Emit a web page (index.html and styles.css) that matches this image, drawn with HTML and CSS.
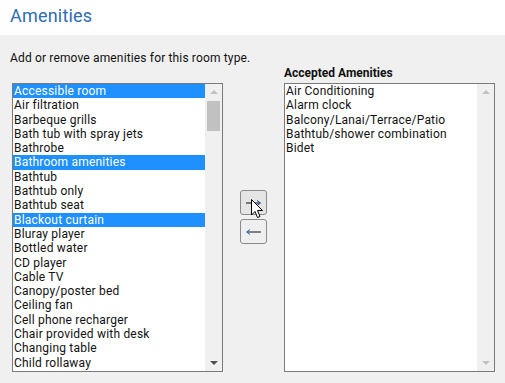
FILE: index.html
```html
<!DOCTYPE html>
<html>
<head>
    <title>Amenities</title>
    <meta charset="utf-8">
    <link rel="stylesheet" href="styles.css">
</head>
<body>
<div class="page-head">
    <h1>Amenities</h1>
</div>

<div class="panel">
    <p class="intro">Add or remove amenities for this room type.</p>

    <div class="picker">
        <div class="col">
            <div class="col-label">&nbsp;</div>
            <div class="listbox">
                <div class="rows">
                    <div class="row sel">Accessible room</div>
                    <div class="row">Air filtration</div>
                    <div class="row">Barbeque grills</div>
                    <div class="row">Bath tub with spray jets</div>
                    <div class="row">Bathrobe</div>
                    <div class="row sel">Bathroom amenities</div>
                    <div class="row">Bathtub</div>
                    <div class="row">Bathtub only</div>
                    <div class="row">Bathtub seat</div>
                    <div class="row sel">Blackout curtain</div>
                    <div class="row">Bluray player</div>
                    <div class="row">Bottled water</div>
                    <div class="row">CD player</div>
                    <div class="row">Cable TV</div>
                    <div class="row">Canopy/poster bed</div>
                    <div class="row">Ceiling fan</div>
                    <div class="row">Cell phone recharger</div>
                    <div class="row">Chair provided with desk</div>
                    <div class="row">Changing table</div>
                    <div class="row">Child rollaway</div>
                </div>
                <div class="scrollbar">
                    <span class="arrow up"></span>
                    <span class="thumb"></span>
                    <span class="track"></span>
                    <span class="arrow down dark"></span>
                </div>
            </div>
        </div>

        <div class="moves">
            <button type="button" class="move-btn hover">
                <svg width="17" height="8" viewBox="0 0 17 8">
                    <line x1="1" y1="4" x2="15" y2="4" stroke="#111" stroke-width="1"/>
                    <polyline points="12,1.5 15.5,4 12,6.5" fill="none" stroke="#1b3f9a" stroke-width="1"/>
                </svg>
                <svg class="pointer" width="13" height="21" viewBox="0 0 13 21">
                    <polygon points="0.5,0.5 0.5,16 4,12.5 6.5,18.5 9,17.5 6.5,11.5 11.5,11.5" fill="#fff" stroke="#000" stroke-width="1" stroke-linejoin="round"/>
                </svg>
            </button>
            <button type="button" class="move-btn">
                <svg width="17" height="8" viewBox="0 0 17 8">
                    <line x1="2" y1="4" x2="16" y2="4" stroke="#111" stroke-width="1"/>
                    <polyline points="5,1.5 1.5,4 5,6.5" fill="none" stroke="#1b6fd0" stroke-width="1"/>
                </svg>
            </button>
        </div>

        <div class="col">
            <div class="col-label">Accepted Amenities</div>
            <div class="listbox">
                <div class="rows">
                    <div class="row">Air Conditioning</div>
                    <div class="row">Alarm clock</div>
                    <div class="row">Balcony/Lanai/Terrace/Patio</div>
                    <div class="row">Bathtub/shower combination</div>
                    <div class="row">Bidet</div>
                </div>
                <div class="scrollbar">
                    <span class="arrow up"></span>
                    <span class="track"></span>
                    <span class="arrow down"></span>
                </div>
            </div>
        </div>
    </div>
</div>
</body>
</html>
```

FILE: styles.css
```css
body {
    margin: 0;
    background-color: #f0f0f0;
    font-family: Roboto, "Liberation Sans", sans-serif;
    color: #111;
    font-size: 12px;
}
.page-head {
    background-color: #ffffff;
    height: 35px;
    padding-left: 10px;
    box-sizing: border-box;
}
.page-head h1 {
    margin: 0;
    padding-top: 4px;
    font-size: 18px;
    line-height: 24px;
    font-weight: 400;
    letter-spacing: 0.2px;
    color: #2e6cb4;
}
.panel {
    padding: 16px 10px 0 10px;
}
.intro {
    margin: 0;
    line-height: 14px;
    letter-spacing: 0.15px;
}
.picker {
    display: flex;
    align-items: flex-start;
    margin-left: 2px;
}
.col {
    display: flex;
    flex-direction: column;
}
.col-label {
    height: 16px;
    line-height: 16px;
    margin-bottom: 2px;
    font-weight: 700;
    font-size: 12px;
}
.listbox {
    display: flex;
    width: 211px;
    height: 289px;
    box-sizing: border-box;
    border: 1px solid #7a7a7a;
    background-color: #ffffff;
    overflow: hidden;
}
.rows {
    flex: 1;
    overflow: hidden;
}
.row {
    height: 14.3px;
    line-height: 14px;
    padding-left: 1px;
    white-space: nowrap;
    letter-spacing: 0.2px;
}
.row.sel {
    background-color: #1e90ff;
    color: #ffffff;
}
.scrollbar {
    width: 17px;
    display: flex;
    flex-direction: column;
    align-items: center;
    background-color: #f0f0f0;
}
.arrow {
    width: 0;
    height: 0;
    border-left: 4px solid transparent;
    border-right: 4px solid transparent;
    margin: 6px 0;
}
.arrow.up {
    border-bottom: 4px solid #c2c2c2;
}
.arrow.down {
    border-top: 4px solid #c2c2c2;
}
.arrow.down.dark {
    border-top-color: #505050;
}
.scrollbar .thumb {
    width: 13px;
    height: 30px;
    background-color: #c1c1c1;
    margin-top: 1px;
}
.scrollbar .track {
    flex: 1;
}
.moves {
    display: flex;
    flex-direction: column;
    align-items: center;
    gap: 4px;
    width: 61px;
    padding-top: 125px;
}
.move-btn {
    position: relative;
    width: 27px;
    height: 25px;
    padding: 0;
    border: 1px solid #8a8a8a;
    border-radius: 3px;
    background-color: #efefef;
    display: flex;
    align-items: center;
    justify-content: center;
}
.move-btn.hover {
    background-color: #e5e5e5;
}
.move-btn .pointer {
    position: absolute;
    left: 10px;
    top: 8px;
}
```
